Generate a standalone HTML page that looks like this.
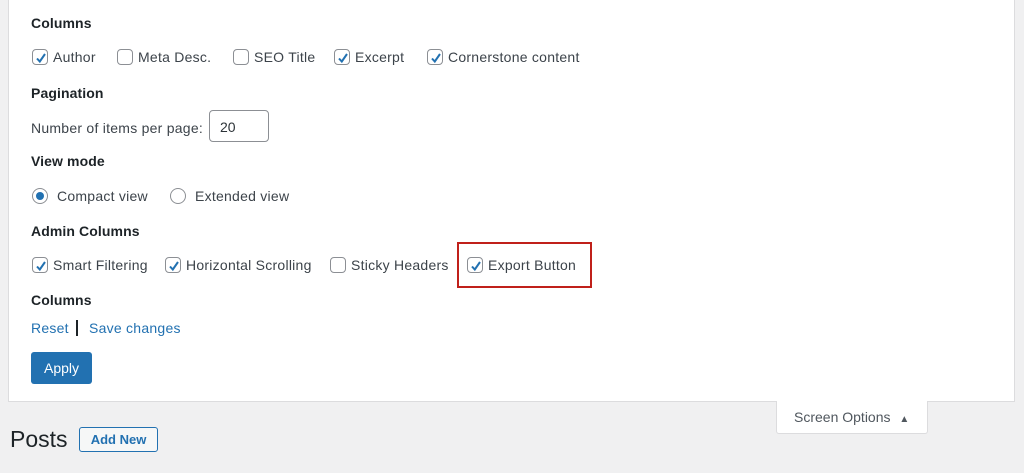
<!DOCTYPE html><html><head><style>
body{margin:0;width:1024px;height:473px;background:#f0f0f1;font-family:"Liberation Sans",sans-serif;font-size:14px;color:#3c434a;position:relative;overflow:hidden}
.panel{position:absolute;left:8px;top:-2px;width:1007px;height:404px;background:#fff;border:1px solid #dcdcde;box-sizing:border-box}
.a{position:absolute;white-space:nowrap}
h5{position:absolute;margin:0;font-size:14px;font-weight:bold;color:#1d2327;left:31px;letter-spacing:0.1px}
.cb{position:absolute;width:16px;height:16px;border:1px solid #8c8f94;border-radius:4px;box-sizing:border-box;background:#fff}
.cb svg{position:absolute;left:1px;top:1px}
.rd{position:absolute;width:16px;height:16px;border:1px solid #8c8f94;border-radius:50%;box-sizing:border-box;background:#fff}
.lbl{position:absolute;white-space:nowrap;line-height:16px;letter-spacing:0.25px}
a{color:#2271b1;text-decoration:none}
</style></head><body>
<div class="panel"></div>
<h5 style="top:15px">Columns</h5>
<h5 style="top:85px">Pagination</h5>
<div class="lbl" style="left:31px;top:120px">Number of items per page:</div>
<div class="a" style="left:209px;top:110px;width:60px;height:32px;border:1px solid #8c8f94;border-radius:4px;box-sizing:border-box;padding:8px 0 0 10px;color:#2c3338">20</div>
<h5 style="top:153px">View mode</h5>
<div class="rd" style="left:32px;top:188px"><div style="position:absolute;left:3px;top:3px;width:8px;height:8px;border-radius:50%;background:#2271b1"></div></div>
<div class="lbl" style="left:57px;top:188px">Compact view</div>
<div class="rd" style="left:170px;top:188px"></div>
<div class="lbl" style="left:195px;top:188px">Extended view</div>
<h5 style="top:223px">Admin Columns</h5>
<h5 style="top:292px">Columns</h5>
<div class="lbl" style="left:31px;top:320px"><a>Reset</a></div>
<div class="a" style="left:76px;top:320px;width:2px;height:16px;background:#1d2327"></div>
<div class="lbl" style="left:89px;top:320px"><a>Save changes</a></div>
<div class="a" style="left:31px;top:352px;width:61px;height:32px;background:#2271b1;border-radius:3px;color:#fff;text-align:center;line-height:32px">Apply</div>
<div class="a" style="left:457px;top:242px;width:135px;height:46px;border:2px solid #c0201a;box-sizing:border-box"></div>
<div class="a" style="left:776px;top:401px;width:152px;height:33px;background:#fff;border:1px solid #dcdcde;border-top:none;border-radius:0 0 3px 3px;box-sizing:border-box;color:#50575e;padding-top:8px;padding-left:17px">Screen Options <span style="font-size:10px;margin-left:5px">▲</span></div>
<div class="a" style="left:10px;top:426px;font-size:23px;color:#1d2327">Posts</div>
<div class="a" style="left:79px;top:427px;width:79px;height:25px;border:1px solid #2271b1;border-radius:3px;box-sizing:border-box;color:#2271b1;font-weight:bold;font-size:13px;text-align:center;line-height:23px;background:#f6f7f7">Add New</div>
<script>
const ck='<svg width="14" height="14" viewBox="0 0 14 14"><path d="M3 7.5 L5.8 10.5 L11 3" fill="none" stroke="#2271b1" stroke-width="2"/></svg>';
function row(y,items){let h='';for(const [x,c,t] of items){h+=`<div class="cb" style="left:${x}px;top:${y}px">${c?ck:''}</div><div class="lbl" style="left:${x+21}px;top:${y}px">${t}</div>`;}document.body.insertAdjacentHTML('beforeend',h);}
row(49,[[32,1,'Author'],[117,0,'Meta Desc.'],[233,0,'SEO Title'],[334,1,'Excerpt'],[427,1,'Cornerstone content']]);
row(257,[[32,1,'Smart Filtering'],[165,1,'Horizontal Scrolling'],[330,0,'Sticky Headers'],[467,1,'Export Button']]);
</script>
</body></html>
